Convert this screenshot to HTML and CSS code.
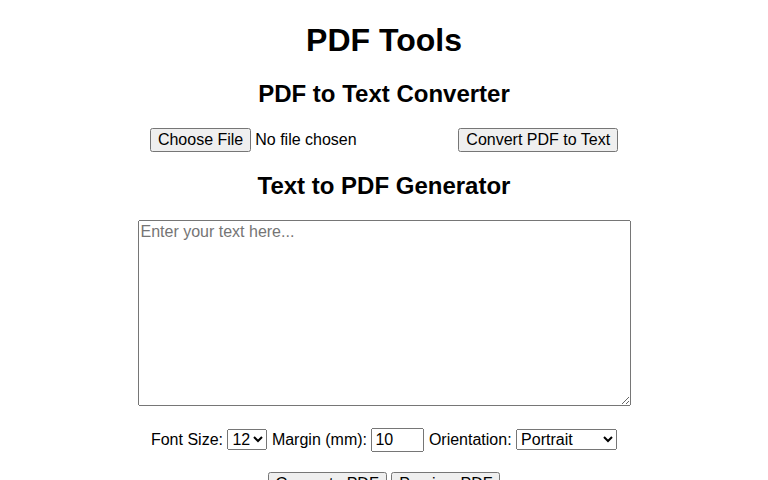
FILE: index.html
```html
<!DOCTYPE html>
<html lang="en">
<head>
<meta charset="utf-8">
<title>PDF Tools</title>
<link rel="stylesheet" href="styles.css">
</head>
<body>
<h1 class="title">PDF Tools</h1>
<section class="tool">
  <h2 class="tool-title">PDF to Text Converter</h2>
  <div class="row">
    <input type="file" class="file-input" accept="application/pdf">
    <button class="btn">Convert PDF to Text</button>
  </div>
</section>
<section class="tool">
  <h2 class="tool-title">Text to PDF Generator</h2>
  <div class="text-wrap">
    <textarea class="text-area" placeholder="Enter your text here..."></textarea>
  </div>
  <div class="options">
    <label>Font Size:</label>
    <select class="sel-size">
      <option>12</option>
    </select>
    <label>Margin (mm):</label>
    <input type="number" class="num-input" value="10">
    <label>Orientation:</label>
    <select class="sel-orient">
      <option>Portrait</option>
      <option>Landscape</option>
    </select>
  </div>
  <div class="actions">
    <button class="btn">Generate PDF</button>
    <button class="btn">Preview PDF</button>
  </div>
</section>
</body>
</html>
```
FILE: styles.css
```css
body {
  margin: 0;
  font-family: "Liberation Sans", Arial, sans-serif;
  text-align: center;
  color: #000;
  background: #fff;
}
.title {
  font-size: 32px;
  margin: 22px 0 21px;
}
.tool-title {
  font-size: 24px;
  margin: 20px 0;
}
.row {
  height: 24px;
}
button, input, select, textarea {
  font-family: "Liberation Sans", Arial, sans-serif;
  font-size: 16px;
}
.file-input {
  width: 304px;
}
.text-wrap {
  margin-top: 20px;
  height: 186px;
}
.text-area {
  box-sizing: border-box;
  width: 493px;
  height: 186px;
  display: block;
  margin: 0 auto;
}
.options {
  margin-top: 22px;
}
.num-input {
  box-sizing: border-box;
  width: 53px;
}
.sel-orient {
  width: 101px;
}
.actions {
  margin-top: 20px;
}
```
